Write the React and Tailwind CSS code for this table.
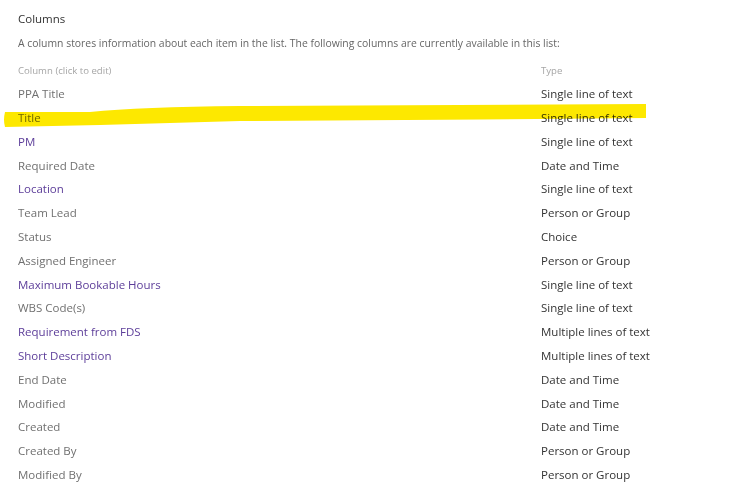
import React from "react";

const columns = [
  { name: "PPA Title", type: "Single line of text" },
  { name: "Title", type: "Single line of text" },
  { name: "PM", type: "Single line of text", link: true },
  { name: "Required Date", type: "Date and Time" },
  { name: "Location", type: "Single line of text", link: true },
  { name: "Team Lead", type: "Person or Group" },
  { name: "Status", type: "Choice" },
  { name: "Assigned Engineer", type: "Person or Group" },
  { name: "Maximum Bookable Hours", type: "Single line of text", link: true },
  { name: "WBS Code(s)", type: "Single line of text" },
  { name: "Requirement from FDS", type: "Multiple lines of text", link: true },
  { name: "Short Description", type: "Multiple lines of text", link: true },
  { name: "End Date", type: "Date and Time" },
  { name: "Modified", type: "Date and Time" },
  { name: "Created", type: "Date and Time" },
  { name: "Created By", type: "Person or Group" },
  { name: "Modified By", type: "Person or Group" },
];

const App = () => {
  return (
    <div className="relative w-[731px] h-[496px] bg-white overflow-hidden font-['Open_Sans',sans-serif]">
      <div className="pl-[18px] pt-[11px]">
        <h2 className="text-[11.5px] leading-[16px] text-[#333]">Columns</h2>
        <p className="mt-[9px] text-[10.4px] leading-[14px] text-[#666]">
          A column stores information about each item in the list. The following columns are currently available in this list:
        </p>

        {/* Tabla de columnas */}
        <div className="mt-[14px] grid grid-cols-[523px_1fr] text-[9.6px] leading-[14px] text-[#a6a6a6]">
          <div>Column (click to edit)</div>
          <div>Type</div>
        </div>
        <div className="mt-[4px]">
          {columns.map((col) => (
            <div key={col.name} className="grid grid-cols-[523px_1fr] h-[23.8px] items-center text-[11.5px]">
              <span className={col.link ? "text-[#5c3d99]" : "text-[#707070]"}>{col.name}</span>
              <span className="text-[#333]">{col.type}</span>
            </div>
          ))}
        </div>
      </div>

      {/* Marcador amarillo */}
      <svg className="absolute left-0 top-0 pointer-events-none mix-blend-multiply" width="731" height="496">
        <path
          d="M5,112 L90,112 Q140,107 240,106 L646,104 L646,118 L480,119.5 L240,121 L100,125 L5,127 Q3,120 5,112 Z"
          fill="#fde800"
        />
      </svg>
    </div>
  );
};

export default App;
